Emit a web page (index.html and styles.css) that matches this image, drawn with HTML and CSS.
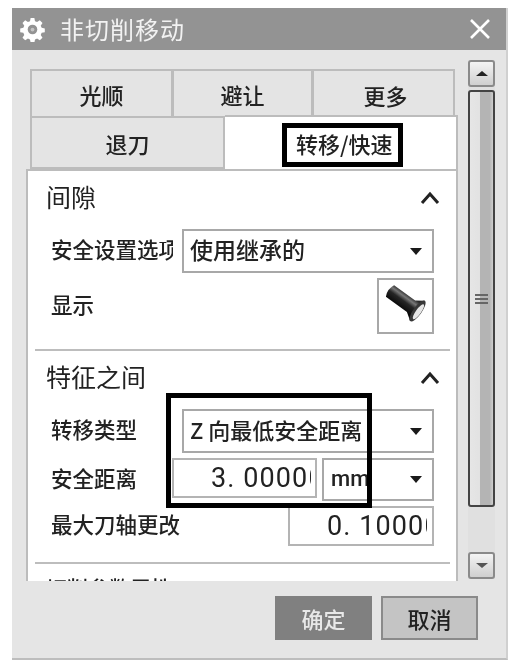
FILE: index.html
```html
<!DOCTYPE html>
<html lang="zh">
<head>
<meta charset="utf-8">
<title>非切削移动</title>
<link rel="stylesheet" href="styles.css">
</head>
<body>
<div class="window">
  <div class="titlebar">
    <svg class="gear" viewBox="0 0 24 24" width="25" height="25"><path fill="#fff" d="M10.2 1h3.6l.6 3 2 .9 2.6-1.7 2.6 2.6-1.7 2.6.9 2 3 .6v3.6l-3 .6-.9 2 1.7 2.6-2.6 2.6-2.6-1.7-2 .9-.6 3h-3.6l-.6-3-2-.9-2.6 1.7-2.6-2.6 1.7-2.6-.9-2-3-.6v-3.6l3-.6.9-2-1.7-2.6 2.6-2.6 2.6 1.7 2-.9z"/><circle cx="12" cy="12" r="4.6" fill="#939393"/><circle cx="12" cy="12" r="1.8" fill="#c4c4c4"/></svg>
    <span class="title">非切削移动</span>
    <svg class="close" viewBox="0 0 20 20" width="20" height="20"><path d="M1 1l18 18M19 1L1 19" stroke="#fff" stroke-width="2.6" fill="none"/></svg>
  </div>
  <div class="content">
    <div class="main">
      <div class="tabrow">
        <div class="tab t1">光顺</div>
        <div class="tab t2">避让</div>
        <div class="tab t3">更多</div>
      </div>
      <div class="tabrow second">
        <div class="tab back">退刀</div>
        <div class="tab active"><span class="tablabel">转移/快速</span></div>
      </div>
      <div class="panel">
        <div class="head first"><span>间隙</span><svg class="chev" viewBox="0 0 20 14" width="20" height="14"><path d="M2 12l8-9 8 9" fill="none" stroke="#222" stroke-width="3"/></svg></div>
        <div class="row">
          <div class="label clip">安全设置选项</div>
          <div class="select wide"><span class="val big">使用继承的</span><i class="caret"></i></div>
        </div>
        <div class="row show">
          <div class="label">显示</div>
          <div class="iconbtn">
            <svg viewBox="0 0 44 44" width="44" height="44">
              <defs>
                <linearGradient id="barrel" gradientUnits="userSpaceOnUse" x1="0" y1="-8" x2="0" y2="8"><stop offset="0" stop-color="#2a2a2a"/><stop offset=".25" stop-color="#777"/><stop offset=".5" stop-color="#262626"/><stop offset="1" stop-color="#080808"/></linearGradient>
              </defs>
              <g transform="translate(6 7) rotate(36)">
                <path d="M0-7H26L34-12.5V12.5L26 7H0Q-3.5 0 0-7z" fill="url(#barrel)"/>
                <ellipse cx="34" cy="0" rx="4.2" ry="12.5" fill="#383838"/>
                <ellipse cx="35.2" cy="0" rx="2.6" ry="9" fill="#e6e6e6"/>
              </g>
            </svg>
          </div>
        </div>
        <div class="divider"></div>
        <div class="head"><span>特征之间</span><svg class="chev" viewBox="0 0 20 14" width="20" height="14"><path d="M2 12l8-9 8 9" fill="none" stroke="#222" stroke-width="3"/></svg></div>
        <div class="row">
          <div class="label short">转移类型</div>
          <div class="select wide"><span class="val">Z 向最低安全距离</span><i class="caret"></i></div>
        </div>
        <div class="row tight">
          <div class="label dist">安全距离</div>
          <div class="input first-input"><span class="num n1">3. 00000</span></div>
          <div class="select unit"><span class="val latin">mm</span><i class="caret"></i></div>
        </div>
        <div class="row tight spread">
          <div class="label">最大刀轴更改</div>
          <div class="input second-input"><span class="num n2">0. 10000</span></div>
        </div>
        <div class="divider last"></div>
        <div class="head cut"><span>切削参数属性</span><svg class="chev" viewBox="0 0 24 14" width="24" height="14"><path d="M1 10l5-6 5 6M13 10l5-6 5 6" fill="none" stroke="#444" stroke-width="3"/></svg></div>
      </div>
    </div>
    <div class="scrollbar">
      <div class="sbtn"><i class="up"></i></div>
      <div class="thumb"><i class="grip"></i><i class="grip"></i><i class="grip"></i></div>
      <div class="sbtn down"><i class="dn"></i></div>
    </div>
    <div class="mark mark-tab"></div>
    <div class="mark mark-fields"></div>
  </div>
  <div class="footer">
    <div class="btn ok">确定</div>
    <div class="btn cancel">取消</div>
  </div>
</div>
</body>
</html>
```
FILE: styles.css
```css
* { box-sizing: border-box; }
html, body { margin: 0; padding: 0; background: #fff; }
body {
  padding: 8px 0 0 12px;
  font-family: "Noto Sans CJK SC", "Liberation Sans", sans-serif;
  color: #222;
  font-size: 21.5px;
  filter: blur(0.55px);
}
.window {
  width: 496px;
  height: 652px;
  background: #e5e5e5;
  display: flex;
  flex-direction: column;
  border-bottom: 2px solid #bdbdbd;
  border-right: 2px solid #d0d0d0;
}
.titlebar {
  height: 42px;
  flex: none;
  background: #939393;
  display: flex;
  align-items: center;
  padding: 0 16px 0 8px;
  color: #f2f2f2;
}
.gear { flex: none; }
.title { margin-left: 15px; font-size: 24px; letter-spacing: 1px; flex: 1; line-height: 1; }
.close { flex: none; }
.content { position: relative; flex: none; height: 531px; display: flex; }
.main { width: 432px; margin-left: 14px; padding-top: 19px; display: flex; flex-direction: column; flex: none; }
.tabrow { display: flex; padding-left: 4px; height: 49px; flex: none; }
.tabrow.second { height: 51px; align-items: flex-end; }
.tab {
  background: #e4e4e4;
  border: 2px solid #bcbcbc;
  display: flex;
  align-items: center;
  justify-content: center;
  line-height: 1;
  font-size: 22px;
  font-weight: 500;
}
.t1 { width: 144px; border-right-width: 3px; }
.t2 { width: 140px; border-left: 0; border-right-width: 3px; }
.t3 { width: 141px; border-left: 0; border-bottom: 0; padding-left: 4px; }
.back { width: 195px; height: 51px; border-top: 0; }
.active {
  width: 233px;
  height: 54px;
  margin-top: -3px;
  background: #fff;
  border-left: 0;
  border-bottom: 0;
  position: relative;
  z-index: 1;
  padding-left: 71px;
  justify-content: flex-start;
}
.panel {
  width: 432px;
  height: 412px;
  flex: none;
  background: #fff;
  border: 2px solid #bcbcbc;
  border-bottom: 0;
  overflow: hidden;
  padding: 0 6px 0 7px;
}
.head {
  height: 30px;
  margin-top: 10px;
  padding: 0 10px 0 11px;
  display: flex;
  align-items: center;
  justify-content: space-between;
  font-size: 25px;
  line-height: 1;
  flex: none;
}
.chev { flex: none; margin-top: 3px; }
.row { display: flex; align-items: center; padding: 0 16px; height: 44px; margin-top: 18px; }
.row.show { height: 56px; margin-top: 5px; justify-content: space-between; }
.row.tight { margin-top: 5px; height: 43px; }
.row.spread { justify-content: space-between; height: 40px; }
.label { line-height: 1; white-space: nowrap; flex: none; padding-bottom: 4px; font-weight: 500; }
.label.clip { width: 122px; overflow: hidden; margin-right: 9px; }
.label.short { width: 131px; }
.label.dist { width: 121px; }
.select {
  display: flex;
  align-items: center;
  justify-content: space-between;
  height: 44px;
  background: #fff;
  border: 2px solid #a8a8a8;
  padding: 0 10px 0 6px;
  flex: none;
}
.select.wide { width: 252px; }
.select.unit { width: 112px; margin-left: 5px; height: 43px; padding-left: 7px; }
.val { line-height: 1; font-size: 22px; padding-bottom: 4px; font-weight: 500; }
.val.big { font-size: 23px; }
.val.latin { font-family: Roboto, "Liberation Sans", sans-serif; font-size: 22px; font-weight: 500; padding-bottom: 2px; }
.caret { width: 0; height: 0; border: 6px solid transparent; border-top: 7px solid #1a1a1a; border-bottom: 0; flex: none; }
.iconbtn { width: 57px; height: 56px; border: 2px solid #a8a8a8; display: flex; align-items: center; justify-content: center; flex: none; }
.divider { height: 2px; background: #bdbdbd; margin: 15px 0 0; }
.input {
  height: 40px;
  border: 2px solid #b4b4b4;
  display: flex;
  align-items: center;
  flex: none;
  font-family: Roboto, "Liberation Sans", sans-serif;
}
.first-input { width: 145px; align-self: flex-start; padding-left: 37px; }
.second-input { width: 146px; padding-left: 37px; }
.num { display: block; font-size: 27px; font-weight: 400; letter-spacing: 1.1px; white-space: nowrap; line-height: 1; overflow: hidden; color: #222; }
.n1 { width: 100px; }
.n2 { width: 100px; }
.divider.last { margin-top: 16px; }
.head.cut { margin-top: 8px; font-size: 21px; font-weight: 500; }
.scrollbar {
  width: 27px;
  margin-left: 10px;
  margin-top: 10px;
  height: 519px;
  background: #e0e0e0;
  display: flex;
  flex-direction: column;
  justify-content: space-between;
  flex: none;
  position: relative;
}
.sbtn {
  height: 27px;
  flex: none;
  border: 2px solid #8a8a8a;
  border-radius: 3px;
  background: linear-gradient(#f4f4f4, #cfcfcf);
  display: flex;
  align-items: center;
  justify-content: center;
}
.up { width: 0; height: 0; border: 6px solid transparent; border-bottom: 5px solid #222; border-top: 0; }
.dn { width: 0; height: 0; border: 6px solid transparent; border-top: 5px solid #555; border-bottom: 0; }
.thumb {
  position: absolute;
  left: 0;
  top: 30px;
  width: 27px;
  height: 417px;
  border: 2px solid #444;
  border-radius: 3px;
  background: linear-gradient(90deg, #e6e6e6 0, #e2e2e2 45%, #b4b4b4 45%, #b4b4b4 85%, #cfcfcf 100%);
  display: flex;
  flex-direction: column;
  align-items: center;
  justify-content: center;
  gap: 2px;
}
.grip { width: 13px; height: 2px; background: #666; }
.mark { position: absolute; border: 5px solid #000; z-index: 3; pointer-events: none; }
.mark-tab { left: 270px; top: 73px; width: 121px; height: 44px; }
.mark-fields { left: 154px; top: 343px; width: 206px; height: 115px; }
.footer { flex: 1; display: flex; justify-content: flex-end; align-items: flex-start; gap: 9px; padding: 15px 28px 0 0; }
.btn { width: 97px; height: 44px; display: flex; align-items: center; justify-content: center; line-height: 1; font-size: 22px; font-weight: 500; }
.ok { background: #808080; color: #e8e8e8; }
.cancel { background: #c4c4c4; border: 2px solid #8a8a8a; color: #222; }
```
